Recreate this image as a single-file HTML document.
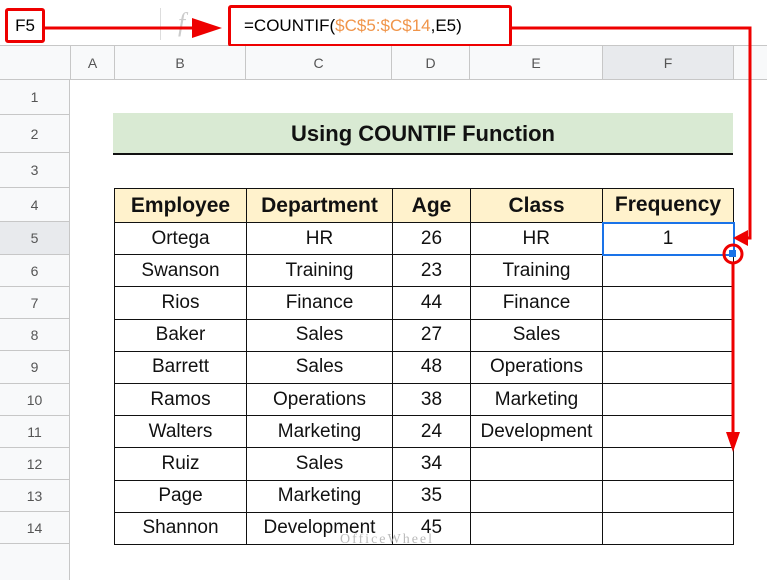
<!DOCTYPE html>
<html><head><meta charset="utf-8"><style>
*{margin:0;padding:0;box-sizing:border-box}
body{width:767px;height:580px;background:#fff;position:relative;overflow:hidden;font-family:"Liberation Sans",Arial,sans-serif}
.abs{position:absolute}
.ch{position:absolute;top:46px;height:34px;border-right:1px solid #c7c7c7;border-bottom:1px solid #c7c7c7;background:#f8f9fa;color:#555;font-size:14px;text-align:center;line-height:34px}
.rh{position:absolute;left:0;width:70px;border-bottom:1px solid #c7c7c7;border-right:1px solid #c7c7c7;background:#f8f9fa;color:#555;font-size:14px;text-align:center}
table{position:absolute;left:114px;top:188px;border-collapse:collapse;table-layout:fixed;width:619px}
td{border:1.5px solid #111;text-align:center;font-size:19px;color:#111;padding:0;height:32.2px;white-space:nowrap}
tr.h td{background:#fff2cc;font-weight:bold;font-size:21px;height:34px}
</style></head><body>
<div class="abs" style="left:0;top:0;width:767px;height:46px;border-bottom:1px solid #c7c7c7"></div>
<div class="abs" style="left:5px;top:8px;width:40px;height:35px;border:3px solid #e00;border-radius:3px;font-size:17px;line-height:29px;text-align:center;background:#fff">F5</div>
<div class="abs" style="left:160px;top:8px;width:1px;height:32px;background:#ddd"></div>
<div class="abs" style="left:178px;top:8px;font-family:'Liberation Serif',serif;font-style:italic;font-size:26px;color:#ccc">f</div>
<div class="abs" style="left:228px;top:5px;width:284px;height:42px;border:3px solid #e00;border-radius:3px;background:#fff;font-size:17px;line-height:36px;padding-left:13px">=COUNTIF(<span style="color:#f0954a">$C$5:$C$14</span>,E5)</div>
<div class="ch" style="left:0;width:71px"></div>
<div class="ch" style="left:71px;width:44px">A</div>
<div class="ch" style="left:115px;width:131px">B</div>
<div class="ch" style="left:246px;width:146px">C</div>
<div class="ch" style="left:392px;width:78px">D</div>
<div class="ch" style="left:470px;width:133px">E</div>
<div class="ch" style="left:603px;width:131px;background:#e8eaed">F</div>
<div class="ch" style="left:734px;width:40px"></div>
<div class="rh" style="top:80px;height:35px;line-height:35px">1</div>
<div class="rh" style="top:115px;height:38px;line-height:38px">2</div>
<div class="rh" style="top:153px;height:35px;line-height:35px">3</div>
<div class="rh" style="top:188px;height:34px;line-height:34px">4</div>
<div class="rh" style="top:222px;height:33px;line-height:33px;background:#e8eaed">5</div>
<div class="rh" style="top:255px;height:32px;line-height:32px">6</div>
<div class="rh" style="top:287px;height:32px;line-height:32px">7</div>
<div class="rh" style="top:319px;height:32px;line-height:32px">8</div>
<div class="rh" style="top:351px;height:33px;line-height:33px">9</div>
<div class="rh" style="top:384px;height:32px;line-height:32px">10</div>
<div class="rh" style="top:416px;height:32px;line-height:32px">11</div>
<div class="rh" style="top:448px;height:32px;line-height:32px">12</div>
<div class="rh" style="top:480px;height:32px;line-height:32px">13</div>
<div class="rh" style="top:512px;height:32px;line-height:32px">14</div>
<div class="abs" style="left:0;top:544px;width:70px;height:36px;background:#f8f9fa;border-right:1px solid #c7c7c7"></div>
<div class="abs" style="left:113px;top:113px;width:620px;height:42px;background:#d9ead3;border-bottom:2px solid #111;font-weight:bold;font-size:22px;text-align:center;line-height:42px;color:#111">Using COUNTIF Function</div>
<table>
<colgroup><col style="width:132px"><col style="width:146px"><col style="width:78px"><col style="width:132px"><col style="width:131px"></colgroup>
<tr class="h"><td>Employee</td><td>Department</td><td>Age</td><td>Class</td><td>Frequency</td></tr>
<tr><td>Ortega</td><td>HR</td><td>26</td><td>HR</td><td style="border:2.5px solid #1a73e8">1</td></tr>
<tr><td>Swanson</td><td>Training</td><td>23</td><td>Training</td><td></td></tr>
<tr><td>Rios</td><td>Finance</td><td>44</td><td>Finance</td><td></td></tr>
<tr><td>Baker</td><td>Sales</td><td>27</td><td>Sales</td><td></td></tr>
<tr><td>Barrett</td><td>Sales</td><td>48</td><td>Operations</td><td></td></tr>
<tr><td>Ramos</td><td>Operations</td><td>38</td><td>Marketing</td><td></td></tr>
<tr><td>Walters</td><td>Marketing</td><td>24</td><td>Development</td><td></td></tr>
<tr><td>Ruiz</td><td>Sales</td><td>34</td><td></td><td></td></tr>
<tr><td>Page</td><td>Marketing</td><td>35</td><td></td><td></td></tr>
<tr><td>Shannon</td><td>Development</td><td>45</td><td></td><td></td></tr>
</table>
<div class="abs" style="left:340px;top:532px;font-size:14px;color:#bbb;letter-spacing:2px;font-family:'Liberation Serif',serif">OfficeWheel</div>
<svg class="abs" style="left:0;top:0" width="767" height="580">
<g stroke="#e00" stroke-width="3" fill="none">
<line x1="45" y1="28" x2="200" y2="28"/>
<polyline points="512,28 750,28 750,238 740,238"/>
<circle cx="733" cy="254" r="9"/>
<line x1="733" y1="263" x2="733" y2="435"/>
</g>
<g fill="#e00">
<polygon points="192,18 222,28 192,38"/>
<polygon points="748,230 733,238 748,246"/>
<polygon points="726,432 733,452 740,432"/>
</g>
<rect x="729" y="250" width="7" height="7" fill="#1a73e8"/>
</svg>
</body></html>
